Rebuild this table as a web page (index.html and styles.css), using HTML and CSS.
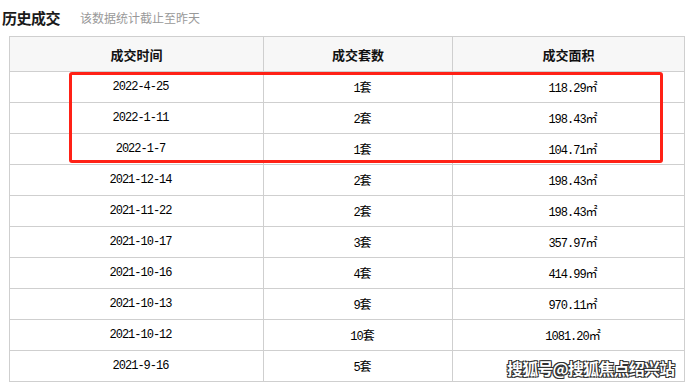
FILE: index.html
```html
<!DOCTYPE html>
<html lang="zh-CN">
<head>
<meta charset="utf-8">
<title>历史成交</title>
<link rel="stylesheet" href="styles.css">
</head>
<body>
<div class="page">
  <div class="title-row">
    <h2 class="title">历史成交</h2>
    <span class="sub">该数据统计截止至昨天</span>
  </div>
  <div class="table-wrap">
    <table class="deals">
      <thead>
        <tr><th class="c1">成交时间</th><th class="c2">成交套数</th><th class="c3">成交面积</th></tr>
      </thead>
      <tbody>
        <tr><td>2022-4-25</td><td>1套</td><td>118.29㎡</td></tr>
        <tr><td>2022-1-11</td><td>2套</td><td>198.43㎡</td></tr>
        <tr><td>2022-1-7</td><td>1套</td><td>104.71㎡</td></tr>
        <tr><td>2021-12-14</td><td>2套</td><td>198.43㎡</td></tr>
        <tr><td>2021-11-22</td><td>2套</td><td>198.43㎡</td></tr>
        <tr><td>2021-10-17</td><td>3套</td><td>357.97㎡</td></tr>
        <tr><td>2021-10-16</td><td>4套</td><td>414.99㎡</td></tr>
        <tr><td>2021-10-13</td><td>9套</td><td>970.11㎡</td></tr>
        <tr><td>2021-10-12</td><td>10套</td><td>1081.20㎡</td></tr>
        <tr><td>2021-9-16</td><td>5套</td><td></td></tr>
      </tbody>
    </table>
    <div class="highlight"></div>
    <div class="watermark">搜狐号@搜狐焦点绍兴站</div>
  </div>
</div>
</body>
</html>
```
FILE: styles.css
```css
html, body {
  margin: 0;
  padding: 0;
  background: #fff;
}
.page {
  padding: 6px 0 0 2px;
  font-family: "Noto Sans CJK SC", sans-serif;
}
.title-row {
  display: flex;
  align-items: center;
  gap: 20px;
  height: 22px;
}
.title {
  margin: 0;
  font-size: 15px;
  font-weight: bold;
  color: #1a1a1a;
  letter-spacing: -0.5px;
}
.sub {
  font-size: 12px;
  color: #999;
}
.table-wrap {
  position: relative;
  margin: 8px 0 0 7px;
  width: 676px;
}
.deals {
  border-collapse: collapse;
  width: 676px;
  table-layout: fixed;
}
.deals th, .deals td {
  border: 1px solid #cfcfcf;
  text-align: center;
  padding: 0;
}
.deals th {
  background: #f7f7f7;
  height: 34px;
  font-size: 13px;
  font-weight: bold;
  color: #111;
}
.c1 { width: 253px; }
.c2 { width: 188px; }
.deals td {
  height: 30px;
  padding-left: 8px;
  font-family: "Liberation Mono", "Noto Sans CJK SC", monospace;
  font-size: 12px;
  letter-spacing: -1px;
  color: #000;
}
.highlight {
  position: absolute;
  left: 60px;
  top: 36px;
  width: 588px;
  height: 85px;
  border: 3px solid #ff2116;
  border-radius: 3px;
}
.watermark {
  position: absolute;
  left: 498px;
  top: 320px;
  font-size: 16px;
  font-weight: bold;
  color: #fff;
  letter-spacing: -0.8px;
  text-shadow: 0 0 1px #222, 1px 1px 0 #333, -1px -1px 0 #333, 1px -1px 0 #333, -1px 1px 0 #333;
}
```
